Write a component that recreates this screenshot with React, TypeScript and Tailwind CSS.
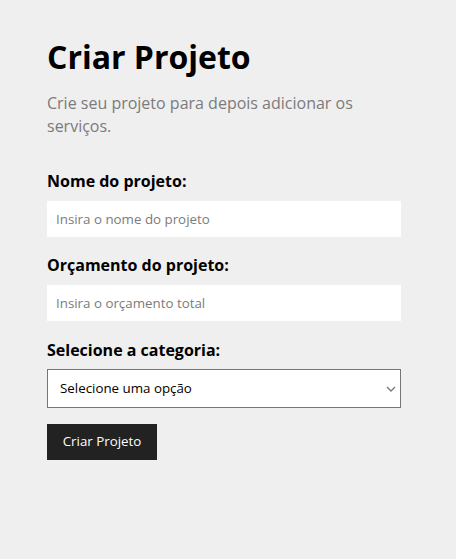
import React from "react";

export default function App() {
  return (
    <div className="min-h-screen bg-[#efefef] font-['Open_Sans',sans-serif] text-black">
      <div className="w-[354px] ml-[47px] pt-[33px]">
        <h1 className="text-[32px] font-bold leading-[48px]">Criar Projeto</h1>
        <p className="mt-[11px] text-[16px] leading-[23px] text-[#7b7b7b]">
          Crie seu projeto para depois adicionar os serviços.
        </p>
        <form className="mt-[31px] flex flex-col" onSubmit={(e) => e.preventDefault()}>
          <label className="text-[16px] font-bold leading-[24px]">Nome do projeto:</label>
          <input
            type="text"
            placeholder="Insira o nome do projeto"
            className="mt-[8px] h-[36px] w-full bg-white px-[9px] text-[13.33px] outline-none placeholder:text-[#7b7b7b]"
          />
          <label className="mt-[16px] text-[16px] font-bold leading-[24px]">Orçamento do projeto:</label>
          <input
            type="text"
            placeholder="Insira o orçamento total"
            className="mt-[8px] h-[36px] w-full bg-white px-[9px] text-[13.33px] outline-none placeholder:text-[#7b7b7b]"
          />
          <label className="mt-[17px] text-[16px] font-bold leading-[24px]">Selecione a categoria:</label>
          <div className="relative mt-[7px] h-[39px] w-full border border-[#767676] bg-white">
            <div className="flex h-full items-center pl-[12px] text-[13.33px]">Selecione uma opção</div>
            <svg
              className="absolute right-[4px] top-[16px]"
              width="10"
              height="6"
              viewBox="0 0 10 6"
              fill="none"
              stroke="#7a7a7a"
              strokeWidth="1.3"
            >
              <path d="M1 1 L5 5 L9 1" />
            </svg>
          </div>
          <div className="mt-[16px]">
            <button
              type="submit"
              className="h-[36px] w-[110px] bg-[#222222] text-[13.33px] text-white"
            >
              Criar Projeto
            </button>
          </div>
        </form>
      </div>
    </div>
  );
}
